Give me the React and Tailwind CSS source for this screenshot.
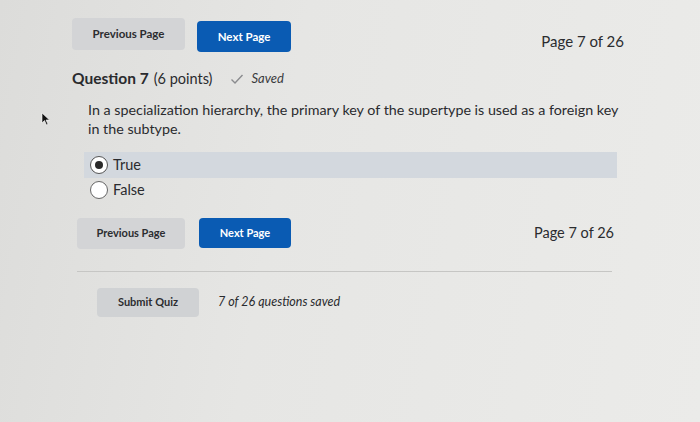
export default function App() {
  const font = { fontFamily: "Lato, 'Open Sans', sans-serif" };
  return (
    <div
      className="w-[700px] h-[422px] overflow-hidden relative bg-[linear-gradient(100deg,#dcdcda_0%,#e6e6e4_40%,#ebebe9_100%)] text-[#2a2b2e]"
      style={font}
    >
      {/* cursor */}
      <svg className="absolute left-[41px] top-[112px]" width="10" height="14" viewBox="0 0 10 14">
        <path d="M1 1 L1 11 L3.5 8.5 L5.5 13 L7 12.3 L5 8 L8.5 8 Z" fill="#111" stroke="#fff" strokeWidth="0.6" />
      </svg>

      <div className="pl-[72px] pr-[76px] pt-[18px]">
        {/* top nav */}
        <div className="flex items-start">
          <button className="w-[113px] h-[32px] rounded-[4px] bg-[#d3d4d6] text-[11.5px] font-bold text-[#2c2d30]">
            Previous Page
          </button>
          <button className="ml-[12px] mt-[3px] w-[94px] h-[31px] rounded-[4px] bg-[#0a5bb3] text-[11.5px] font-bold text-white">
            Next Page
          </button>
          <div className="ml-auto mt-[12px] text-[15px] text-[#2b2c2f]">Page 7 of 26</div>
        </div>

        {/* question header */}
        <div className="mt-[16px] flex items-center h-[20px]">
          <span className="text-[15.5px] font-bold">Question 7</span>
          <span className="ml-[5px] text-[14.5px]">(6 points)</span>
          <svg className="ml-[18px]" width="14" height="12" viewBox="0 0 14 12">
            <path d="M1.5 6.5 L5 10 L12.5 2" fill="none" stroke="#8a8b8e" strokeWidth="1.4" />
          </svg>
          <span className="ml-[7px] text-[13px] italic text-[#3a3b3e]">Saved</span>
        </div>

        {/* question text */}
        <div className="mt-[11px] pl-[16px] text-[14.3px] leading-[19px] text-[#2a2b2e]">
          In a specialization hierarchy, the primary key of the supertype is used as a foreign key
          <br />
          in the subtype.
        </div>

        {/* options */}
        <div className="mt-[14px] ml-[12px] mr-[7px]">
          <div className="h-[26px] bg-[#d3d8de] flex items-center pl-[6px]">
            <span className="w-[18px] h-[18px] rounded-full border-[1.5px] border-[#555] bg-white flex items-center justify-center">
              <span className="w-[8px] h-[8px] rounded-full bg-[#2a2a2a]" />
            </span>
            <span className="ml-[5px] text-[14.5px]">True</span>
          </div>
          <div className="h-[24px] flex items-center pl-[6px]">
            <span className="w-[18px] h-[18px] rounded-full border-[1.5px] border-[#666] bg-white" />
            <span className="ml-[5px] text-[14.5px]">False</span>
          </div>
        </div>

        {/* bottom nav */}
        <div className="mt-[16px] ml-[5px] flex items-center">
          <button className="w-[108px] h-[31px] rounded-[4px] bg-[#d3d4d6] text-[11px] font-bold text-[#2c2d30]">
            Previous Page
          </button>
          <button className="ml-[14px] w-[92px] h-[30px] rounded-[4px] bg-[#0a5bb3] text-[11px] font-bold text-white">
            Next Page
          </button>
          <div className="ml-auto mr-[10px] text-[14.5px] text-[#2b2c2f]">Page 7 of 26</div>
        </div>

        {/* hr */}
        <div className="mt-[22px] ml-[5px] mr-[12px] h-px bg-[#c6c6c4]" />

        {/* submit */}
        <div className="mt-[16px] ml-[25px] flex items-center">
          <button className="w-[102px] h-[29px] rounded-[4px] bg-[#d0d2d4] text-[11px] font-bold text-[#2c2d30]">
            Submit Quiz
          </button>
          <span className="ml-[19px] text-[12.5px] italic text-[#2a2b2e]">7 of 26 questions saved</span>
        </div>
      </div>
    </div>
  );
}
